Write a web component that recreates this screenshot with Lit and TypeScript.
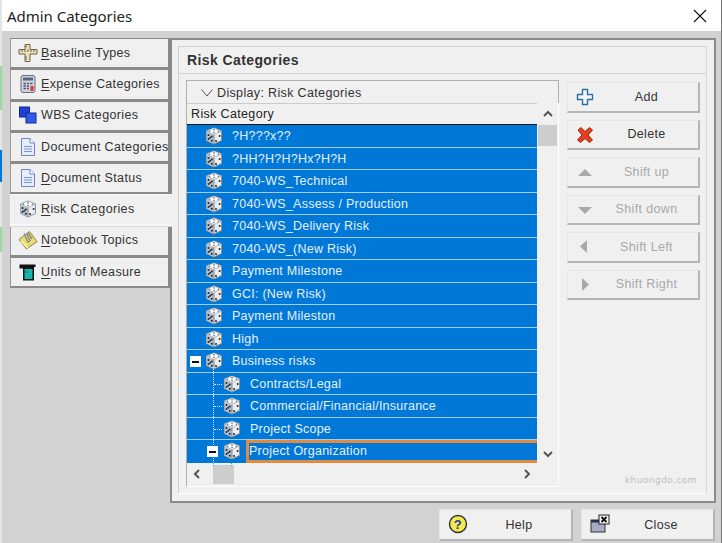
import { LitElement, html, css, svg } from "lit";
import { customElement } from "lit/decorators.js";

const dice = () => html`<svg class="dice" viewBox="0 0 18 18" width="18" height="18">
  <path d="M9 1 L16.5 4 V13.5 L9 17 L1.5 13.5 V4 Z" fill="#e9edf0" stroke="#8d9298" stroke-width="1"/>
  <path d="M9 1 L16.5 4 L9 7.5 L1.5 4 Z" fill="#fff" stroke="#9aa0a6" stroke-width=".7"/>
  <path d="M1.5 4 V13.5 L9 17 V7.5 Z" fill="#b9c3cc"/>
  <path d="M9 7.5 V17" stroke="#6d757c" stroke-width=".8"/>
  ${[[4.5, 4.2], [9, 2.9], [13.4, 4.2], [9, 5.5]].map(([x, y]) => svg`<circle cx=${x} cy=${y} r=".8" fill="#4d6a88"/>`)}
  ${[[3.5, 8], [6.8, 9.6], [3.5, 12], [6.8, 13.8], [5.2, 10.8]].map(([x, y]) => svg`<circle cx=${x} cy=${y} r="1" fill="#1f2a38"/>`)}
  ${[[11, 14], [14.6, 9]].map(([x, y]) => svg`<circle cx=${x} cy=${y} r="1" fill="#1f2a38"/>`)}
</svg>`;

const doc = html`<svg viewBox="0 0 18 20" width="18" height="20"><path d="M2.5 1.5 H11 L15.5 6 V18.5 H2.5 Z" fill="#e6ecfa" stroke="#6f86c4"/><path d="M11 1.5 V6 H15.5" fill="#fff" stroke="#6f86c4"/><path d="M5 9.5 H13 M5 12 H13 M5 14.5 H13" stroke="#7f95d0"/></svg>`;

const tabIcons: Record<string, unknown> = {
  baseline: html`<svg viewBox="0 0 20 20" width="20" height="20"><path d="M7 1.5 H12 V6.5 H19 V11 H12 V18.5 H7 V11 H1 V6.5 H7 Z" fill="#ece0b4" stroke="#6b6650"/><path d="M4 6.5 V9 M7 6.5 V9 M10 6.5 V9 M13 6.5 V9 M16 6.5 V9 M7 3.5 H9 M7 14 H9 M7 16 H9" stroke="#6b6650" fill="none"/></svg>`,
  expense: html`<svg viewBox="0 0 18 20" width="18" height="20"><rect x="2" y="1.5" width="14" height="17" rx="2" fill="#cfd3de" stroke="#6a6f86"/><rect x="4" y="3.5" width="10" height="3" fill="#5d6480"/><path d="M4.5 9.5 H7 M8 9.5 H10 M11 9.5 H13.5 M4.5 12 H7 M8 12 H10 M4.5 14.5 H7 M8 14.5 H10" stroke="#50566e" stroke-width="1.5"/><rect x="11.5" y="12" width="3" height="5" fill="#e03232"/></svg>`,
  wbs: html`<svg viewBox="0 0 18 18" width="18" height="18"><rect x="0.5" y="1" width="10" height="10" fill="#1e3fd8" stroke="#16288e"/><rect x="7" y="7" width="10" height="10" fill="#2f5be8" stroke="#16288e"/></svg>`,
  doc,
  risk: dice(),
  notebook: html`<svg viewBox="0 0 20 20" width="20" height="20"><path d="M1 9.5 L11.5 1.5 L19 11.5 L8.5 19 Z" fill="#e6dc78" stroke="#8b843e"/><path d="M3 11 L10 18" stroke="#fff6b0" stroke-width="1.5"/><path d="M6 3.5 L10 12 L12 10.5 L8.5 3.5 M10 2.5 L14 9" fill="none" stroke="#8e8e84" stroke-width="1.5"/></svg>`,
  units: html`<svg viewBox="0 0 18 20" width="18" height="20"><path d="M0.5 2.5 H16.5 V5 H15 V18.5 H4 V6.5 H0.5 Z" fill="#111"/><rect x="5.5" y="7" width="8" height="10" fill="#19b5ad"/><path d="M5.5 10 H9" stroke="#0c6f6a"/></svg>`,
};

const tabs = [
  ["baseline", "B", "aseline Types"],
  ["expense", "E", "xpense Categories"],
  ["wbs", "", "WBS Categories"],
  ["doc", "", "Document Categories"],
  ["doc", "D", "ocument Status"],
  ["risk", "R", "isk Categories", "active"],
  ["notebook", "N", "otebook Topics"],
  ["units", "U", "nits of Measure"],
];

const rows: [string, number, boolean?, boolean?][] = [
  ["?H???x??", 0],
  ["?HH?H?H?Hx?H?H", 0],
  ["7040-WS_Technical", 0],
  ["7040-WS_Assess / Production", 0],
  ["7040-WS_Delivery Risk", 0],
  ["7040-WS_(New Risk)", 0],
  ["Payment Milestone", 0],
  ["GCI: (New Risk)", 0],
  ["Payment Mileston", 0],
  ["High", 0],
  ["Business risks", 0, true],
  ["Contracts/Legal", 1],
  ["Commercial/Financial/Insurance", 1],
  ["Project Scope", 1],
  ["Project Organization", 1, true, true],
];

const actions: [string, unknown, boolean][] = [
  ["Add", html`<svg viewBox="0 0 20 20" width="20" height="20"><path d="M7.5 2.5 H12.5 V7.5 H17.5 V12.5 H12.5 V17.5 H7.5 V12.5 H2.5 V7.5 H7.5 Z" fill="#f3f6fa" stroke="#2d6f9f" stroke-width="1.4"/></svg>`, false],
  ["Delete", html`<svg viewBox="0 0 20 20" width="20" height="20"><path d="M3 5 L6 2.5 L10 6.5 L14.5 2.5 L17.5 5 L13 10 L17.5 15 L14.5 17.5 L10 13.5 L5.5 17.5 L2.5 15 L7 10 Z" fill="#e5401b" stroke="#8f2a10"/></svg>`, false],
  ["Shift up", html`<svg viewBox="0 0 20 20" width="20" height="20"><path d="M3 14 L10 7 L17 14 Z" fill="#a9a9a9"/></svg>`, true],
  ["Shift down", html`<svg viewBox="0 0 20 20" width="20" height="20"><path d="M3 7 H17 L10 14 Z" fill="#a9a9a9"/></svg>`, true],
  ["Shift Left", html`<svg viewBox="0 0 20 20" width="20" height="20"><path d="M12 3 V16 L5 9.5 Z" fill="#a9a9a9"/></svg>`, true],
  ["Shift Right", html`<svg viewBox="0 0 20 20" width="20" height="20"><path d="M7 3 L14 9.5 L7 16 Z" fill="#a9a9a9"/></svg>`, true],
];

const chev = (d: string) => html`<svg class="chev" viewBox="0 0 10 10" width="10" height="10"><path d=${d} fill="none" stroke="#555" stroke-width="2"/></svg>`;

@customElement("app-root")
export class AppRoot extends LitElement {
  static styles = css`
    :host { display: block; width: 722px; height: 543px; overflow: hidden; font-family: "Liberation Sans", Arial, sans-serif; font-size: 12.5px; color: #333; letter-spacing: .35px; }
    .win { width: 722px; height: 543px; display: flex; flex-direction: column; background: #d2d2d2; border-right: 1px solid #777; box-sizing: border-box; position: relative; }
    .title { height: 31px; flex: none; background: #fff; display: flex; align-items: center; justify-content: space-between; padding: 0 14px 0 7px; font-family: "Noto Sans", sans-serif; font-size: 15px; letter-spacing: -.03px; color: #222; }
    .edge { position: absolute; left: 0; top: 0; width: 2px; height: 100%; background: linear-gradient(#e4e4e4 0 66px, #9fd89f 66px 110px, #e4e4e4 110px 150px, #0078d7 150px 182px, #e4e4e4 182px 227px, #9fd89f 227px 252px, #e4e4e4 252px); }
    .main { flex: none; height: 465px; margin: 7px 5px 0 10px; display: flex; }
    .tabs { width: 160px; flex: none; display: flex; flex-direction: column; }
    .tab { height: 31.3px; flex: none; box-sizing: border-box; border: 2px solid #8a8a8a; border-width: 1px 2px 2px 1px; border-left-color: #999; background: #f0f0f0; display: flex; align-items: center; gap: 3px; padding: 0 0 1px 7px; white-space: nowrap; }
    .tab.active { background: #f0f0f0; border-color: #f8f8f8; border-right-color: #f0f0f0; width: 162px; z-index: 1; margin-right: -2px; position: relative; box-shadow: 0 1px 0 #d8d8d8; }
    .tab .ic { width: 20px; height: 20px; flex: none; display: flex; align-items: center; justify-content: center; }
    u { text-decoration: underline; text-underline-offset: 2px; }
    .panel { flex: 1; min-width: 0; box-sizing: border-box; border: 2px solid #8a8a8a; background: #f0f0f0; padding: 6px 7px 7px 6px; display: flex; }
    .frame { flex: 1; min-width: 0; display: flex; flex-direction: column; box-sizing: border-box; border: 1px solid; border-color: #d0d0d0 #d8d8d8 #fff #d0d0d0; }
    .ptitle { height: 27px; flex: none; box-sizing: border-box; font-weight: bold; font-size: 14px; letter-spacing: .4px; color: #333; display: flex; align-items: center; padding-left: 8px; border-bottom: 1px solid #d0d0d0; }
    .content { flex: 1; display: flex; padding: 6px 0 6px 7px; min-height: 0; }
    .listbox { width: 373px; flex: none; display: flex; flex-direction: column; }
    .disp { height: 23px; flex: none; box-sizing: border-box; border: 1px solid #b0b0b0; border-width: 1px 1px 0 1px; display: flex; align-items: center; gap: 4px; padding: 1px 0 0 14px; }
    .grid { flex: 1; min-height: 0; display: grid; grid-template-columns: 350px 21px; grid-template-rows: 360px 1fr; border-left: 1px solid #b0b0b0; border-right: 1px solid #fff; border-bottom: 1px solid #fff; }
    .left { display: flex; flex-direction: column; min-height: 0; overflow: hidden; }
    .colhead { height: 22px; flex: none; box-sizing: border-box; display: flex; align-items: center; padding-left: 4px; color: #222; border-bottom: 1px solid #111; background: #f0f0f0; border-top: 1px solid #ccc; }
    .row { height: 22.5px; flex: none; box-sizing: border-box; background: #0078d7; border-bottom: 1px solid #a4cdec; color: #e4f0fb; display: flex; align-items: center; position: relative; padding: 1px 0 0 18px; letter-spacing: .25px; }
    .row.l1 { padding-left: 36px; }
    .row .dice { flex: none; }
    .label { margin-left: 8px; padding-left: 1px; }
    .row.focus { border-bottom: none; padding-top: 0; }
    .row.focus .label { flex: 1; align-self: stretch; box-sizing: border-box; border: 3px solid #e08b3e; border-right: none; display: flex; align-items: center; margin-left: 5px; padding-left: 0; }
    .exp { position: absolute; top: 6px; width: 11px; height: 11px; background: #fff; display: flex; align-items: center; justify-content: center; }
    .exp::after { content: ""; width: 7px; height: 2px; background: #111; }
    .l0 .exp { left: 3px; }
    .l1 .exp { left: 20px; }
    .vline { position: absolute; left: 26px; top: 0; bottom: 0; border-left: 1px dotted #cfe6f8; }
    .hline { position: absolute; left: 27px; top: 11px; width: 8px; border-top: 1px dotted #cfe6f8; }
    .l0 .vline { top: 17px; }
    .vsb { background: #f0f0f0; display: flex; flex-direction: column; align-items: center; }
    .vsb .chev { margin-top: 6px; flex: none; }
    .thumb { width: 19px; height: 21px; background: #cdcdcd; margin-top: 6px; }
    .vsb .sp { flex: 1; }
    .vsb .chev.b { margin: 0 0 4px; }
    .hsb { background: #f0f0f0; display: flex; align-items: flex-start; padding: 2px 0 0 5px; position: relative; }
    .hsb .t { width: 21px; height: 19px; background: #cdcdcd; margin-left: 6px; }
    .hsb .sp { flex: 1; }
    .hsb .chev { margin: 4px 5px 0 0; flex: none; }
    .corner { background: #f0f0f0; }
    .lines { position: absolute; top: 0; left: 26px; height: 3px; width: 20px; border-left: 1px dotted #4a90c8; }
    .lines::after { content: ""; position: absolute; left: 17px; top: 0; height: 3px; border-left: 1px dotted #4a90c8; }
    .actions { flex: 1; display: flex; flex-direction: column; gap: 7px; padding: 2px 6px 0 8px; }
    .btn { height: 30.5px; flex: none; box-sizing: border-box; background: #f0f0f0; border: 1px solid; border-width: 1px 2px 2px 1px; border-color: #e6e6e6 #b5b5b5 #b5b5b5 #e6e6e6; display: flex; align-items: center; position: relative; justify-content: center; color: #333; padding-left: 27px; }
    .btn .i { position: absolute; left: 7px; top: 4px; width: 20px; height: 20px; }
    .btn.off { color: #a9a9a9; }
    .wm { position: absolute; right: 24px; top: 475px; font-size: 9px; color: #bdbdbd; letter-spacing: .45px; font-family: "DejaVu Sans", sans-serif; }
    .foot { flex: 1; display: flex; justify-content: flex-end; gap: 8px; padding: 6px 6px 2px 0; }
    .foot .btn { width: 134px; height: 32px; }
    .foot .i { left: 8px; top: 4px; }
  `;

  render() {
    return html`<div class="win">
      <div class="edge"></div>
      <div class="title"><span>Admin Categories</span>
        <svg viewBox="0 0 14 14" width="14" height="14"><path d="M1 1 L13 13 M13 1 L1 13" stroke="#111" stroke-width="1.1"/></svg>
      </div>
      <div class="main">
        <div class="tabs">
          ${tabs.map(([ic, k, t, a]) => html`<div class="tab ${a ?? ""}"><span class="ic">${tabIcons[ic]}</span><span>${k ? html`<u>${k}</u>` : ""}${t}</span></div>`)}
        </div>
        <div class="panel">
          <div class="frame">
          <div class="ptitle">Risk Categories</div>
          <div class="content">
            <div class="listbox">
              <div class="disp"><svg viewBox="0 0 12 8" width="12" height="8"><path d="M.5 .5 L6 7 L11.5 .5" fill="none" stroke="#555"/></svg>Display: Risk Categories</div>
              <div class="grid">
                <div class="left">
                  <div class="colhead">Risk Category</div>
                  ${rows.map(([t, l, e, f], i) => html`<div class="row l${l} ${f ? "focus" : ""}">
                    ${l === 1 ? html`<span class="vline"></span><span class="hline" style="display:${e ? "none" : "block"}"></span>` : ""}
                    ${e ? html`<span class="exp"></span>` : ""}
                    ${i === 10 ? html`<span class="vline"></span>` : ""}
                    ${dice()}<span class="label">${t}</span></div>`)}
                </div>
                <div class="vsb">${chev("M1 7 L5 3 L9 7")}<div class="thumb"></div><div class="sp"></div><svg class="chev b" viewBox="0 0 10 10" width="10" height="10"><path d="M1 3 L5 7 L9 3" fill="none" stroke="#555" stroke-width="2"/></svg></div>
                <div class="hsb"><span class="lines"></span>${chev("M7 1 L3 5 L7 9")}<div class="t"></div><div class="sp"></div>${chev("M3 1 L7 5 L3 9")}</div>
                <div class="corner"></div>
              </div>
            </div>
            <div class="actions">
              ${actions.map(([t, i, off]) => html`<div class="btn ${off ? "off" : ""}"><span class="i">${i}</span>${t}</div>`)}
            </div>
          </div>
          </div>
        </div>
      </div>
      <div class="wm">khuongdo.com</div>
      <div class="foot">
        <div class="btn"><span class="i"><svg viewBox="0 0 20 20" width="20" height="20"><circle cx="10" cy="10" r="8.5" fill="#f0ec50" stroke="#333" stroke-width="1.4"/><text x="10" y="14.5" text-anchor="middle" font-size="13" font-weight="bold" fill="#2038a8" font-family="Liberation Sans">?</text></svg></span>Help</div>
        <div class="btn"><span class="i"><svg viewBox="0 0 20 20" width="20" height="20"><rect x="1" y="6" width="14" height="12" fill="#a9a9c8" stroke="#333"/><rect x="1" y="6" width="14" height="2.5" fill="#2a2f55"/><rect x="9" y="1" width="10" height="9" fill="#f4f4f4" stroke="#222"/><path d="M11.5 3 L16.5 8 M16.5 3 L11.5 8" stroke="#111" stroke-width="1.8"/></svg></span>Close</div>
      </div>
    </div>`;
  }
}
